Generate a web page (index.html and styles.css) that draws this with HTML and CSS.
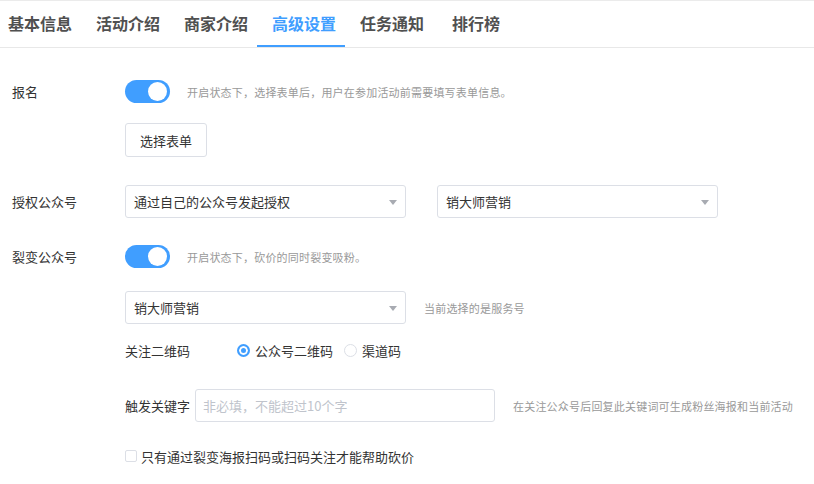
FILE: index.html
```html
<!DOCTYPE html>
<html lang="zh-CN">
<head>
    <meta charset="UTF-8">
    <meta name="viewport" content="width=device-width, initial-scale=1.0">
    <title>高级设置</title>
    <link rel="stylesheet" href="styles.css">
</head>
<body>
    <div class="tabs">
        <a class="tab">基本信息</a>
        <a class="tab">活动介绍</a>
        <a class="tab">商家介绍</a>
        <a class="tab active">高级设置</a>
        <a class="tab">任务通知</a>
        <a class="tab last">排行榜</a>
    </div>

    <div class="form">
        <div class="row row-signup">
            <div class="label">报名</div>
            <div class="content">
                <span class="switch on"></span>
                <span class="tip">开启状态下，选择表单后，用户在参加活动前需要填写表单信息。</span>
            </div>
        </div>
        <div class="row row-button">
            <div class="label"></div>
            <div class="content">
                <button class="btn">选择表单</button>
            </div>
        </div>
        <div class="row row-auth">
            <div class="label">授权公众号</div>
            <div class="content">
                <div class="select">通过自己的公众号发起授权<i class="arrow"></i></div>
                <div class="select second">销大师营销<i class="arrow"></i></div>
            </div>
        </div>
        <div class="row row-fission">
            <div class="label">裂变公众号</div>
            <div class="content">
                <span class="switch on"></span>
                <span class="tip">开启状态下，砍价的同时裂变吸粉。</span>
            </div>
        </div>
        <div class="row row-account">
            <div class="label"></div>
            <div class="content">
                <div class="select">销大师营销<i class="arrow"></i></div>
                <span class="tip tip-side">当前选择的是服务号</span>
            </div>
        </div>
        <div class="row row-qrcode">
            <div class="label"></div>
            <div class="content">
                <span class="sub-label">关注二维码</span>
                <label class="radio checked"><span class="dot"></span>公众号二维码</label>
                <label class="radio"><span class="dot"></span>渠道码</label>
            </div>
        </div>
        <div class="row row-keyword">
            <div class="label"></div>
            <div class="content">
                <span class="sub-label short">触发关键字</span>
                <input class="input" type="text" placeholder="非必填，不能超过10个字">
                <span class="tip tip-side">在关注公众号后回复此关键词可生成粉丝海报和当前活动</span>
            </div>
        </div>
        <div class="row row-check">
            <div class="label"></div>
            <div class="content">
                <label class="checkbox"><span class="box"></span>只有通过裂变海报扫码或扫码关注才能帮助砍价</label>
            </div>
        </div>
    </div>
</body>
</html>
```

FILE: styles.css
```css
body {
    margin: 0;
    background-color: #ffffff;
    color: #333333;
    font-family: "Noto Sans CJK SC", "Liberation Sans", sans-serif;
    font-size: 13px;
}
.tabs {
    display: flex;
    height: 46px;
    border-top: 1px solid #ebebeb;
    border-bottom: 1px solid #e8e8e8;
}
.tab {
    display: block;
    padding: 0 9px 0 15px;
    line-height: 44px;
    font-size: 16px;
    font-weight: bold;
    color: #505050;
    border-bottom: 2px solid transparent;
}
.tab:first-child {
    margin-left: -7px;
}
.tab.active {
    color: #409eff;
    border-bottom-color: #409eff;
}
.tab.last {
    margin-left: 4px;
}
.form {
    padding: 32px 0 0 12px;
}
.row {
    display: flex;
    align-items: center;
}
.label {
    width: 113px;
    flex-shrink: 0;
    color: #333333;
}
.content {
    display: flex;
    align-items: center;
}
.row-signup { height: 23px; margin-bottom: 20px; }
.row-button { height: 34px; margin-bottom: 28px; }
.row-auth { height: 33px; margin-bottom: 27px; }
.row-fission { height: 23px; margin-bottom: 23px; }
.row-account { height: 33px; margin-bottom: 16px; }
.row-qrcode { height: 20px; margin-bottom: 29px; }
.row-keyword { height: 33px; margin-bottom: 26px; }
.row-check { height: 16px; }

.switch {
    position: relative;
    display: inline-block;
    width: 45px;
    height: 23px;
    border-radius: 12px;
    background-color: #409eff;
}
.switch::after {
    content: "";
    position: absolute;
    top: 2px;
    right: 3px;
    width: 19px;
    height: 19px;
    border-radius: 50%;
    background-color: #ffffff;
}
.tip {
    margin-left: 17px;
    font-size: 11px;
    letter-spacing: 0.2px;
    color: #999999;
}
.tip-side {
    margin-left: 18px;
}
.btn {
    width: 82px;
    height: 34px;
    border: 1px solid #dcdfe6;
    border-radius: 3px;
    background: #ffffff;
    color: #333333;
    font-family: inherit;
    font-size: 13px;
    padding: 0;
}
.select {
    position: relative;
    box-sizing: border-box;
    width: 281px;
    height: 33px;
    line-height: 31px;
    padding-left: 8px;
    border: 1px solid #dcdfe6;
    border-radius: 3px;
    color: #333333;
}
.select.second {
    margin-left: 31px;
}
.arrow {
    position: absolute;
    right: 8px;
    top: 14px;
    width: 0;
    height: 0;
    border-left: 4px solid transparent;
    border-right: 4px solid transparent;
    border-top: 5px solid #a8abb2;
}
.sub-label {
    width: 112px;
    color: #333333;
}
.sub-label.short {
    width: 70px;
}
.radio {
    display: flex;
    align-items: center;
    margin-right: 11px;
    color: #333333;
}
.radio .dot {
    box-sizing: border-box;
    width: 13px;
    height: 13px;
    margin-right: 5px;
    border: 1px solid #dcdfe6;
    border-radius: 50%;
    background: #ffffff;
}
.radio.checked .dot {
    border: 2px solid #409eff;
    background: #409eff;
    box-shadow: inset 0 0 0 2px #ffffff;
}
.input {
    box-sizing: border-box;
    width: 300px;
    height: 33px;
    padding: 0 7px;
    border: 1px solid #dcdfe6;
    border-radius: 3px;
    font-family: inherit;
    font-size: 13px;
    color: #333333;
}
.input::placeholder {
    color: #c0c4cc;
}
.checkbox {
    display: flex;
    align-items: center;
    color: #333333;
}
.checkbox .box {
    box-sizing: border-box;
    width: 12px;
    height: 12px;
    margin-right: 4px;
    border: 1px solid #dcdfe6;
    border-radius: 2px;
    background: #ffffff;
}
```
